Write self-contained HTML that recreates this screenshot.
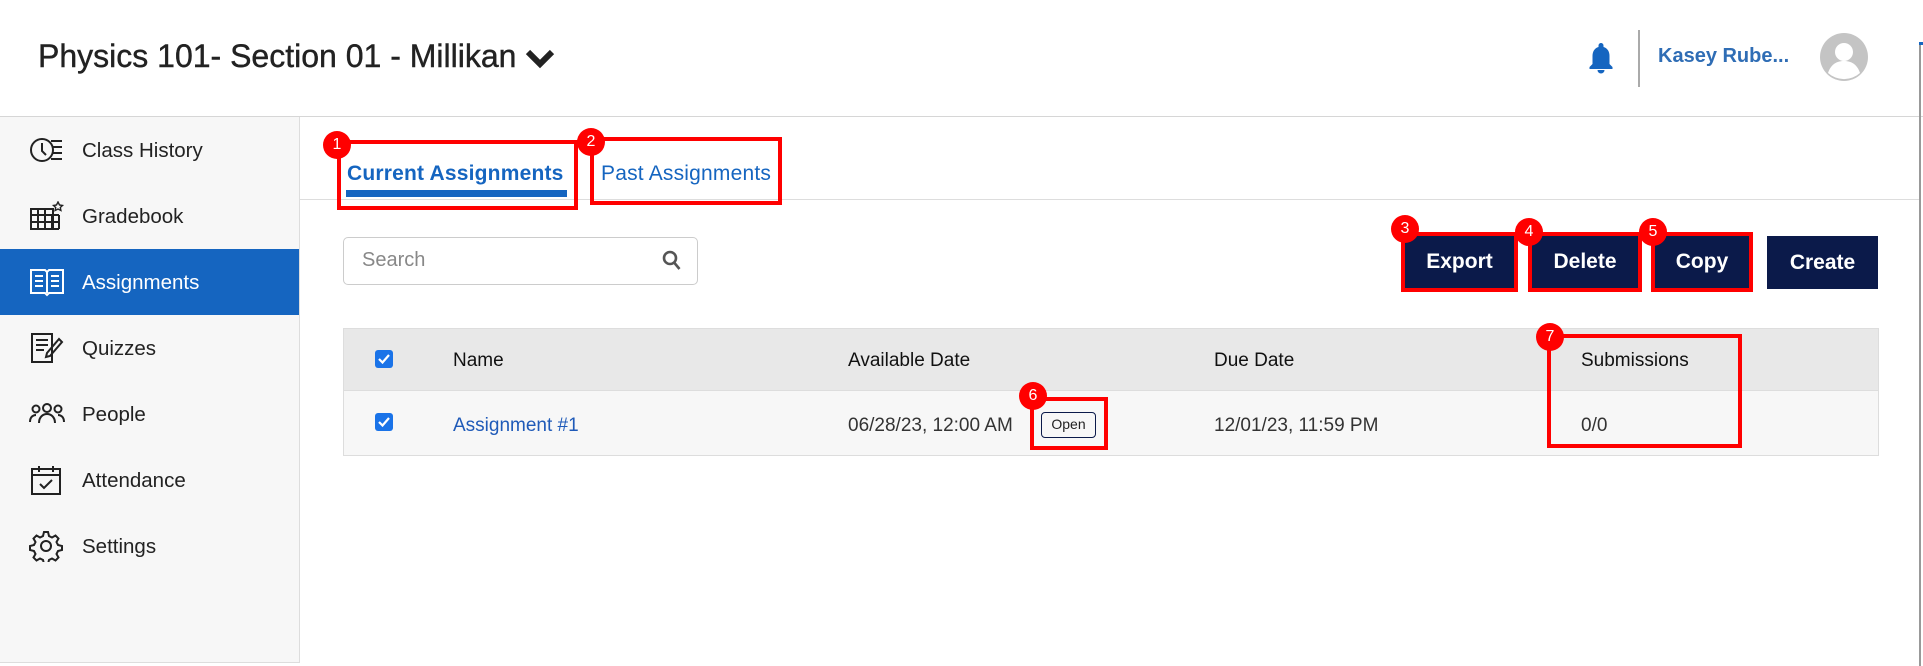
<!DOCTYPE html>
<html><head><meta charset="utf-8"><style>
*{box-sizing:border-box;margin:0;padding:0}
body{width:1923px;height:666px;overflow:hidden;background:#fff;font-family:"Liberation Sans",sans-serif;position:relative;color:#222}
.a{position:absolute}
.hdr{left:0;top:0;width:1923px;height:117px;border-bottom:1px solid #d6d6d6}
.side{left:0;top:117px;width:300px;height:546px;background:#f7f7f7;border-right:1px solid #ddd;border-bottom:1px solid #ddd}
.item{position:absolute;left:0;width:299px;height:66px;display:flex;align-items:center;font-size:20.5px;color:#222}
.item svg{position:absolute;left:29px}
.item span{position:absolute;left:82px;top:22px}
.item.act{background:#1565c0;color:#fff}
.red{position:absolute;border:4px solid #f00}
.bd{position:absolute;width:28px;height:28px;border-radius:50%;background:#f00;color:#fff;font-size:16px;text-align:center;line-height:28px}
.btn{position:absolute;background:#0b1a4a;color:#fff;font-size:21px;font-weight:bold;display:flex;align-items:center;justify-content:center}
.th{position:absolute;font-size:19px;color:#111}
.cb{position:absolute;width:18px;height:18px;background:#1a73e8;border-radius:3px}
</style></head><body>
<div class="a hdr"></div>
<div class="a" style="left:38px;top:38px;font-size:32px;color:#222;-webkit-text-stroke:0.4px #222">Physics 101- Section 01 - Millikan</div>
<svg class="a" style="left:525px;top:48px" width="30" height="22" viewBox="0 0 30 22"><path d="M3 4 L15 16 L27 4" stroke="#222" stroke-width="6" fill="none"/></svg>
<svg class="a" style="left:1588px;top:41px" width="26" height="33" viewBox="0 0 26 33"><path d="M13 2a2.5 2.5 0 0 1 2.5 2.5v1.5c4 1.2 6 4.5 6 9v8l3 3v2H1.5v-2l3-3v-8c0-4.5 2-7.8 6-9V4.5A2.5 2.5 0 0 1 13 2z" fill="#1565c0"/><path d="M9.5 29h7a3.5 3.5 0 0 1-7 0z" fill="#1565c0"/></svg>
<div class="a" style="left:1638px;top:30px;width:2px;height:57px;background:#aaa"></div>
<div class="a" style="left:1658px;top:45px;font-size:20px;font-weight:bold;color:#2f6db5">Kasey Rube...</div>
<svg class="a" style="left:1820px;top:33px" width="48" height="48" viewBox="0 0 48 48"><circle cx="24" cy="24" r="24" fill="#c4c4c4"/><circle cx="24" cy="19" r="9" fill="#fff"/><path d="M8 40c3-9 9-12 16-12s13 3 16 12a24 24 0 0 1-32 0z" fill="#fff"/></svg>
<div class="a" style="left:1919px;top:44px;width:2px;height:622px;background:#999"></div>
<div class="a" style="left:1919px;top:42px;width:4px;height:3px;background:#1565c0"></div>

<div class="a side"></div>
<div class="item" style="top:117px"><svg width="36" height="30" viewBox="0 0 36 30" fill="none" stroke="#222" stroke-width="2"><circle cx="13" cy="15" r="11"/><path d="M13 8v8l4 4M22 6h11M24 12h9M24 18h9M22 24h11"/></svg><span>Class History</span></div>
<div class="item" style="top:183px"><svg width="36" height="30" viewBox="0 0 36 30" fill="none" stroke="#222" stroke-width="2"><path d="M2 8h22v20H2zM2 14h28M2 21h28M9 8v20M16 8v20M23 14v14M30 14v14M30 28H23"/><path d="M29 1l1.5 3 3 .5-2.2 2 .6 3-2.9-1.5-2.9 1.5.6-3-2.2-2 3-.5z" stroke-width="1.4"/></svg><span>Gradebook</span></div>
<div class="item act" style="top:249px"><svg width="36" height="30" viewBox="0 0 36 30" fill="none" stroke="#fff" stroke-width="2"><path d="M2 3h14l2 2 2-2h14v23H20l-2 2-2-2H2z M18 5v21M6 9h8M6 14h8M6 19h8M22 9h8M22 14h8M22 19h8"/></svg><span>Assignments</span></div>
<div class="item" style="top:315px"><svg width="36" height="30" viewBox="0 0 36 30" fill="none" stroke="#222" stroke-width="2"><path d="M3 1h20v28H3zM7 7h12M7 12h12M7 17h8"/><path d="M30 6l3 3-12 14-4 1 1-4z"/></svg><span>Quizzes</span></div>
<div class="item" style="top:381px"><svg width="36" height="30" viewBox="0 0 36 30" fill="none" stroke="#222" stroke-width="2"><circle cx="18" cy="9" r="4"/><circle cx="7" cy="10" r="3.5"/><circle cx="29" cy="10" r="3.5"/><path d="M10 24c0-6 4-9 8-9s8 3 8 9M1 23c0-5 3-7 6-7M35 23c0-5-3-7-6-7"/></svg><span>People</span></div>
<div class="item" style="top:447px"><svg width="36" height="30" viewBox="0 0 36 30" fill="none" stroke="#222" stroke-width="2"><path d="M3 4h28v25H3zM3 10h28M10 1v6M24 1v6M11 19l4 4 8-8"/></svg><span>Attendance</span></div>
<div class="item" style="top:513px"><svg width="36" height="32" viewBox="0 0 36 32" fill="none" stroke="#222" stroke-width="2"><circle cx="17" cy="16" r="5"/><path d="M15 2h4l1 4 3 1.5 3.5-2 3 3-2 3.5 1.5 3 4 1v4l-4 1-1.5 3 2 3.5-3 3-3.5-2-3 1.5-1 4h-4l-1-4-3-1.5-3.5 2-3-3 2-3.5-1.5-3-4-1v-4l4-1 1.5-3-2-3.5 3-3 3.5 2 3-1.5z"/></svg><span>Settings</span></div>

<div class="a" style="left:300px;top:199px;width:1619px;height:1px;background:#ddd"></div>
<div class="a" style="left:347px;top:162px;font-size:21px;font-weight:bold;color:#1565c0;letter-spacing:0.2px">Current Assignments</div>
<div class="a" style="left:346px;top:190px;width:221px;height:7px;background:#1565c0"></div>
<div class="a" style="left:601px;top:162px;font-size:21px;color:#1565c0;letter-spacing:0.2px">Past Assignments</div>
<div class="red" style="left:337px;top:140px;width:241px;height:70px"></div>
<div class="red" style="left:590px;top:137px;width:192px;height:68px"></div>
<div class="bd" style="left:323px;top:131px">1</div>
<div class="bd" style="left:577px;top:128px">2</div>

<div class="a" style="left:343px;top:237px;width:355px;height:48px;border:1px solid #ccc;border-radius:5px"></div>
<div class="a" style="left:362px;top:249px;font-size:20px;color:#888">Search</div>
<svg class="a" style="left:662px;top:250px" width="20" height="22" viewBox="0 0 20 22" fill="none" stroke="#555" stroke-width="2.6"><circle cx="8" cy="8" r="6"/><path d="M12.5 13l5 6"/></svg>

<div class="btn" style="left:1405px;top:236px;width:109px;height:52px">Export</div>
<div class="btn" style="left:1532px;top:236px;width:106px;height:52px">Delete</div>
<div class="btn" style="left:1655px;top:236px;width:94px;height:52px">Copy</div>
<div class="btn" style="left:1767px;top:236px;width:111px;height:53px">Create</div>
<div class="red" style="left:1401px;top:232px;width:117px;height:60px"></div>
<div class="red" style="left:1528px;top:232px;width:114px;height:60px"></div>
<div class="red" style="left:1651px;top:232px;width:102px;height:60px"></div>
<div class="bd" style="left:1391px;top:215px">3</div>
<div class="bd" style="left:1515px;top:218px">4</div>
<div class="bd" style="left:1639px;top:218px">5</div>

<div class="a" style="left:343px;top:328px;width:1536px;height:128px;border:1px solid #ddd;background:#f7f7f7"></div>
<div class="a" style="left:344px;top:329px;width:1534px;height:62px;background:#e8e8e8;border-bottom:1px solid #ddd"></div>
<div class="cb" style="left:375px;top:350px"></div>
<div class="cb" style="left:375px;top:413px"></div>
<svg class="a" style="left:375px;top:350px" width="18" height="18"><path d="M4 9l3.5 3.5L14 5" stroke="#fff" stroke-width="2.2" fill="none"/></svg>
<svg class="a" style="left:375px;top:413px" width="18" height="18"><path d="M4 9l3.5 3.5L14 5" stroke="#fff" stroke-width="2.2" fill="none"/></svg>
<div class="th" style="left:453px;top:350px">Name</div>
<div class="th" style="left:848px;top:350px">Available Date</div>
<div class="th" style="left:1214px;top:350px">Due Date</div>
<div class="th" style="left:1581px;top:350px">Submissions</div>
<div class="th" style="left:453px;top:415px;color:#1f5ab8">Assignment #1</div>
<div class="th" style="left:848px;top:415px;color:#333">06/28/23, 12:00 AM</div>
<div class="a" style="left:1041px;top:412px;width:55px;height:26px;border:1.5px solid #0b1a4a;border-radius:4px;font-size:14px;text-align:center;line-height:23px">Open</div>
<div class="th" style="left:1214px;top:415px;color:#333">12/01/23, 11:59 PM</div>
<div class="th" style="left:1581px;top:415px;color:#333">0/0</div>
<div class="red" style="left:1030px;top:397px;width:78px;height:53px"></div>
<div class="red" style="left:1547px;top:334px;width:195px;height:114px"></div>
<div class="bd" style="left:1019px;top:382px">6</div>
<div class="bd" style="left:1536px;top:323px">7</div>
</body></html>
